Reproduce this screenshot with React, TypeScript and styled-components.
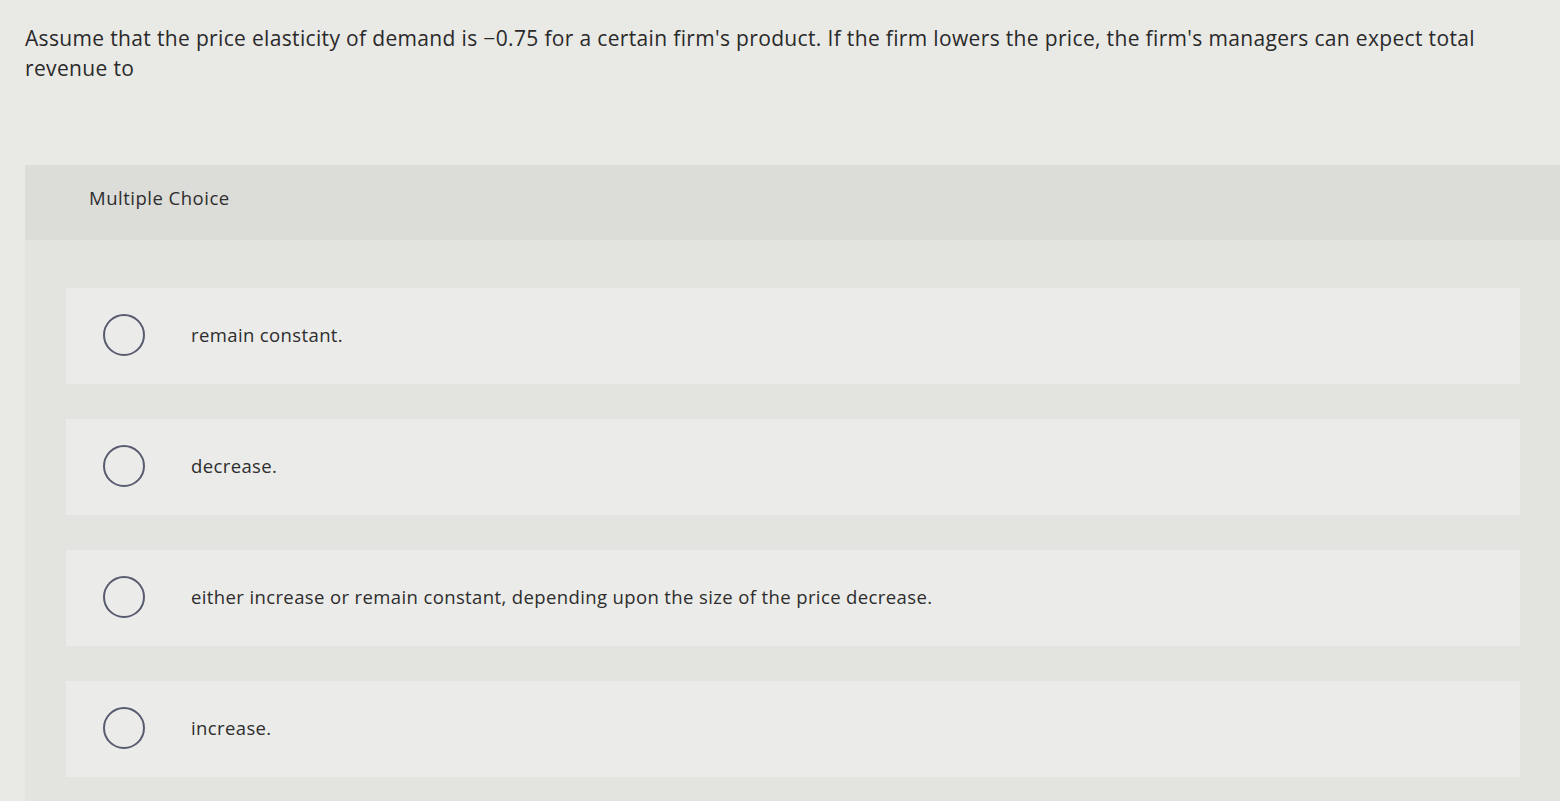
import React from "react";
import styled, { createGlobalStyle } from "styled-components";

const Global = createGlobalStyle`
  html, body { margin: 0; padding: 0; background: #e8e8e5; }
  body { font-family: "Open Sans", Lato, Arial, sans-serif; color: #2b2b2b; }
`;

const Page = styled.div`
  width: 1560px;
  height: 801px;
  overflow: hidden;
  background: #e9e9e6;
  display: flex;
  flex-direction: column;
`;

const Question = styled.p`
  margin: 0;
  width: 1480px;
  padding: 23px 0 0 25px;
  font-size: 21px;
  line-height: 30px;
  letter-spacing: 0.34px;
  color: #2a2a2a;
`;

const Panel = styled.section`
  margin: 82px 0 0 25px;
  flex: 1;
  background: #e3e3e0;
  display: flex;
  flex-direction: column;
`;

const Header = styled.div`
  height: 75px;
  background: #dcdcd9;
  display: flex;
  align-items: center;
  padding: 0 0 10px 64px;
  box-sizing: border-box;
  font-size: 18.5px;
  letter-spacing: 0.5px;
  color: #2e2e2e;
`;

const Options = styled.div`
  display: flex;
  flex-direction: column;
  gap: 35px;
  padding: 48px 40px 0 41px;
`;

const Option = styled.label`
  height: 96px;
  background: #ebebe9;
  display: flex;
  align-items: center;
  padding: 0 0 3px 37px;
  box-sizing: border-box;
  cursor: pointer;
`;

const Radio = styled.span`
  width: 42px;
  height: 42px;
  border-radius: 50%;
  border: 2px solid #585b70;
  box-sizing: border-box;
  flex: none;
`;

const Text = styled.span`
  margin-left: 46px;
  font-size: 18.5px;
  letter-spacing: 0.38px;
  color: #2d2d2d;
`;

const options = [
  "remain constant.",
  "decrease.",
  "either increase or remain constant, depending upon the size of the price decrease.",
  "increase.",
];

export default function App() {
  return (
    <Page>
      <Global />
      <Question>
        Assume that the price elasticity of demand is −0.75 for a certain firm's product. If the firm lowers the price, the firm's managers can expect total revenue to
      </Question>
      <Panel>
        <Header>Multiple Choice</Header>
        <Options>
          {options.map((o) => (
            <Option key={o}>
              <Radio />
              <Text>{o}</Text>
            </Option>
          ))}
        </Options>
      </Panel>
    </Page>
  );
}
